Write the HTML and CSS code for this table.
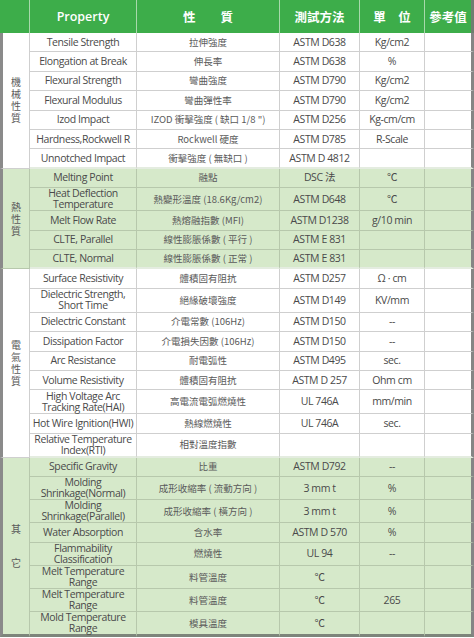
FILE: index.html
```html
<!DOCTYPE html>
<html>
<head>
<meta charset="utf-8">
<link rel="stylesheet" href="styles.css">
</head>
<body>
<table class="spec">
  <colgroup>
    <col class="c-cat"><col class="c-prop"><col class="c-zh"><col class="c-method"><col class="c-unit"><col class="c-ref">
  </colgroup>
  <thead>
    <tr class="head">
      <th class="first"></th>
      <th>Property</th>
      <th class="zh">性　　質</th>
      <th class="zh">測試方法</th>
      <th class="zh">單　位</th>
      <th class="zh last">參考值</th>
    </tr>
  </thead>
  <tbody class="white">
    <tr class="s"><td class="cat" rowspan="7">機<br>械<br>性<br>質</td><td>Tensile Strength</td><td class="zh">拉伸強度</td><td>ASTM D638</td><td>Kg/cm2</td><td class="last"></td></tr>
    <tr class="s"><td>Elongation at Break</td><td class="zh">伸長率</td><td>ASTM D638</td><td>%</td><td class="last"></td></tr>
    <tr class="s"><td>Flexural Strength</td><td class="zh">彎曲強度</td><td>ASTM D790</td><td>Kg/cm2</td><td class="last"></td></tr>
    <tr class="s"><td>Flexural Modulus</td><td class="zh">彎曲彈性率</td><td>ASTM D790</td><td>Kg/cm2</td><td class="last"></td></tr>
    <tr class="s"><td>Izod Impact</td><td class="zh">IZOD 衝擊強度 ( 缺口 1/8 ")</td><td>ASTM D256</td><td>Kg-cm/cm</td><td class="last"></td></tr>
    <tr class="s"><td>Hardness,Rockwell R</td><td class="zh">Rockwell 硬度</td><td>ASTM D785</td><td>R-Scale</td><td class="last"></td></tr>
    <tr class="s end"><td>Unnotched Impact</td><td class="zh">衝擊強度 ( 無缺口 )</td><td>ASTM D 4812</td><td></td><td class="last"></td></tr>
  </tbody>
  <tbody class="green">
    <tr class="s"><td class="cat" rowspan="5">熱<br>性<br>質</td><td>Melting Point</td><td class="zh">融點</td><td>DSC 法</td><td>℃</td><td class="last"></td></tr>
    <tr class="d"><td>Heat Deflection<br>Temperature</td><td class="zh">熱變形溫度 (18.6Kg/cm2)</td><td>ASTM D648</td><td>℃</td><td class="last"></td></tr>
    <tr class="s"><td>Melt Flow Rate</td><td class="zh">熱熔融指數 (MFI)</td><td>ASTM D1238</td><td>g/10 min</td><td class="last"></td></tr>
    <tr class="s"><td>CLTE, Parallel</td><td class="zh">線性膨脹係數 ( 平行 )</td><td>ASTM E 831</td><td></td><td class="last"></td></tr>
    <tr class="s end"><td>CLTE, Normal</td><td class="zh">線性膨脹係數 ( 正常 )</td><td>ASTM E 831</td><td></td><td class="last"></td></tr>
  </tbody>
  <tbody class="white elec">
    <tr class="s"><td class="cat" rowspan="9">電<br>氣<br>性<br>質</td><td>Surface Resistivity</td><td class="zh">體積固有阻抗</td><td>ASTM D257</td><td>Ω · cm</td><td class="last"></td></tr>
    <tr class="d"><td>Dielectric Strength,<br>Short Time</td><td class="zh">絕緣破壞強度</td><td>ASTM D149</td><td>KV/mm</td><td class="last"></td></tr>
    <tr class="s"><td>Dielectric Constant</td><td class="zh">介電常數 (106Hz)</td><td>ASTM D150</td><td>--</td><td class="last"></td></tr>
    <tr class="s"><td>Dissipation Factor</td><td class="zh">介電損失因數 (106Hz)</td><td>ASTM D150</td><td>--</td><td class="last"></td></tr>
    <tr class="s"><td>Arc Resistance</td><td class="zh">耐電弧性</td><td>ASTM D495</td><td>sec.</td><td class="last"></td></tr>
    <tr class="s"><td>Volume Resistivity</td><td class="zh">體積固有阻抗</td><td>ASTM D 257</td><td>Ohm cm</td><td class="last"></td></tr>
    <tr class="d"><td>High Voltage Arc<br>Tracking Rate(HAI)</td><td class="zh">高電流電弧燃燒性</td><td>UL 746A</td><td>mm/min</td><td class="last"></td></tr>
    <tr class="s"><td>Hot Wire Ignition(HWI)</td><td class="zh">熱線燃燒性</td><td>UL 746A</td><td>sec.</td><td class="last"></td></tr>
    <tr class="d end"><td>Relative Temperature<br>Index(RTI)</td><td class="zh">相對溫度指數</td><td></td><td></td><td class="last"></td></tr>
  </tbody>
  <tbody class="green">
    <tr class="s"><td class="cat bottom" rowspan="8"><span class="qi">其</span><span class="ta">它</span></td><td>Specific Gravity</td><td class="zh">比重</td><td>ASTM D792</td><td>--</td><td class="last"></td></tr>
    <tr class="d"><td>Molding<br>Shrinkage(Normal)</td><td class="zh">成形收縮率 ( 流動方向 )</td><td>3 mm t</td><td>%</td><td class="last"></td></tr>
    <tr class="d"><td>Molding<br>Shrinkage(Parallel)</td><td class="zh">成形收縮率 ( 橫方向 )</td><td>3 mm t</td><td>%</td><td class="last"></td></tr>
    <tr class="s"><td>Water Absorption</td><td class="zh">含水率</td><td>ASTM D 570</td><td>%</td><td class="last"></td></tr>
    <tr class="d"><td>Flammability<br>Classification</td><td class="zh">燃燒性</td><td>UL 94</td><td>--</td><td class="last"></td></tr>
    <tr class="d"><td>Melt Temperature<br>Range</td><td class="zh">料管溫度</td><td>℃</td><td></td><td class="last"></td></tr>
    <tr class="d"><td>Melt Temperature<br>Range</td><td class="zh">料管溫度</td><td>℃</td><td>265</td><td class="last"></td></tr>
    <tr class="d bottom"><td>Mold Temperature<br>Range</td><td class="zh">模具溫度</td><td>℃</td><td></td><td class="last"></td></tr>
  </tbody>
</table>
</body>
</html>
```

FILE: styles.css
```css
html, body {
  margin: 0;
  padding: 0;
  background: #ffffff;
}

.spec {
  width: 474px;
  table-layout: fixed;
  border-collapse: separate;
  border-spacing: 0;
  font-family: "Open Sans", "Noto Sans CJK TC", sans-serif;
  font-size: 10.5px;
  letter-spacing: -0.4px;
  color: #4a4a4a;
}

.c-cat { width: 30px; }
.c-prop { width: 107px; }
.c-zh { width: 143px; }
.c-method { width: 80px; }
.c-unit { width: 65px; }
.c-ref { width: 49px; }

.head th {
  height: 33px;
  padding: 0;
  background: #3dad4a;
  color: #ffffff;
  font-weight: 600;
  font-size: 12.5px;
  letter-spacing: 0;
  text-align: center;
  border-right: 1px solid #a8d9ab;
}
.head th.zh {
  font-family: "Noto Sans CJK TC", sans-serif;
  font-weight: 700;
  font-size: 12.5px;
}
.head th.last {
  border-right: 3px solid #6f7f70;
}

td {
  padding: 0;
  text-align: center;
  vertical-align: middle;
  line-height: 11px;
  border-right: 1px solid #cfcfcf;
  border-bottom: 1px solid #cfcfcf;
  white-space: nowrap;
}

td.zh {
  font-family: "Noto Sans CJK TC", sans-serif;
  font-size: 9.5px;
  letter-spacing: 0;
  color: #5a5a5a;
}

td.last {
  border-right: 3px solid #858585;
}

tr.s td { height: 18.4px; }
tr.d td { height: 22.2px; }
tr.s.end td { height: 17.4px; }
tr.d.end td { height: 21.2px; }
tr.d.bottom td { height: 20.2px; }

.elec tr.d td { height: 22.9px; }
.elec tr.d.end td { height: 21.9px; }

.green td {
  background: #d6e9ca;
  border-color: #b7c8ac;
}
.green td.last {
  border-right-color: #858585;
}

tr.end td {
  border-bottom: 2px solid #e4ece0;
}

td.cat {
  border-left: 3px solid #8a8a8a;
  font-family: "Noto Sans CJK TC", sans-serif;
  font-size: 10px;
  line-height: 12px;
  letter-spacing: 0;
  color: #5a5a5a;
  vertical-align: middle;
}

.green td.cat {
  border-right-color: #b7c8ac;
}

tr.bottom td,
td.cat.bottom {
  border-bottom: 3px solid #7d857b;
}

.qi, .ta {
  display: block;
}
.qi {
  margin-bottom: 22px;
}
```
